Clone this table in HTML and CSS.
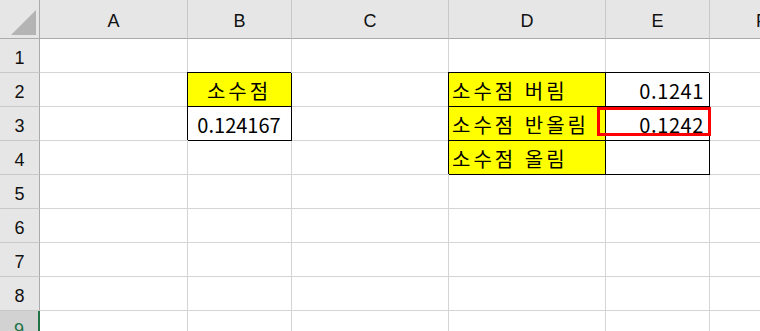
FILE: index.html
```html
<!DOCTYPE html>
<html lang="ko">
<head>
    <meta charset="UTF-8">
    <meta name="viewport" content="width=device-width, initial-scale=1.0">
    <title>소수점 처리</title>
    <link rel="stylesheet" href="styles.css">
</head>
<body>
    <div class="sheet">
        <!-- column headers -->
        <div class="corner"><span class="corner-mark"></span></div>
        <div class="col-head">A</div>
        <div class="col-head">B</div>
        <div class="col-head">C</div>
        <div class="col-head">D</div>
        <div class="col-head">E</div>
        <div class="col-head">F</div>

        <!-- row 1 -->
        <div class="row-head">1</div>
        <div class="cell"></div>
        <div class="cell"></div>
        <div class="cell"></div>
        <div class="cell"></div>
        <div class="cell"></div>
        <div class="cell"></div>

        <!-- row 2 -->
        <div class="row-head">2</div>
        <div class="cell"></div>
        <div class="cell box fill center">소수점</div>
        <div class="cell"></div>
        <div class="cell box fill">소수점 버림</div>
        <div class="cell box num">0.1241</div>
        <div class="cell"></div>

        <!-- row 3 -->
        <div class="row-head">3</div>
        <div class="cell"></div>
        <div class="cell box center">0.124167</div>
        <div class="cell"></div>
        <div class="cell box fill">소수점 반올림</div>
        <div class="cell box num marked">0.1242<span class="highlight"></span></div>
        <div class="cell"></div>

        <!-- row 4 -->
        <div class="row-head">4</div>
        <div class="cell"></div>
        <div class="cell"></div>
        <div class="cell"></div>
        <div class="cell box fill">소수점 올림</div>
        <div class="cell box num"></div>
        <div class="cell"></div>

        <!-- rows 5-8 -->
        <div class="row-head">5</div>
        <div class="cell"></div><div class="cell"></div><div class="cell"></div>
        <div class="cell"></div><div class="cell"></div><div class="cell"></div>

        <div class="row-head">6</div>
        <div class="cell"></div><div class="cell"></div><div class="cell"></div>
        <div class="cell"></div><div class="cell"></div><div class="cell"></div>

        <div class="row-head">7</div>
        <div class="cell"></div><div class="cell"></div><div class="cell"></div>
        <div class="cell"></div><div class="cell"></div><div class="cell"></div>

        <div class="row-head">8</div>
        <div class="cell"></div><div class="cell"></div><div class="cell"></div>
        <div class="cell"></div><div class="cell"></div><div class="cell"></div>

        <!-- row 9 (selected) -->
        <div class="row-head active">9</div>
        <div class="cell"></div><div class="cell"></div><div class="cell"></div>
        <div class="cell"></div><div class="cell"></div><div class="cell"></div>
    </div>
</body>
</html>
```

FILE: styles.css
```css
* {
    margin: 0;
    padding: 0;
    box-sizing: border-box;
}

body {
    background: #fff;
    overflow: hidden;
    font-family: "Liberation Sans", Arial, sans-serif;
}

.sheet {
    display: grid;
    grid-template-columns: 40px 148px 104px 157px 157px 104px 104px;
    grid-template-rows: 39px repeat(9, 34px);
    width: 814px;
}

/* headers */
.corner {
    background: #e6e6e6;
    border-right: 1px solid #ababab;
    border-bottom: 1px solid #ababab;
    display: flex;
    align-items: flex-end;
    justify-content: flex-end;
    padding: 0 3px 3px 0;
}

.corner-mark {
    width: 25px;
    height: 25px;
    background: #b4b4b4;
    clip-path: polygon(100% 0, 100% 100%, 0 100%);
}

.col-head {
    background: #e6e6e6;
    border-right: 1px solid #c8c8c8;
    border-bottom: 1px solid #ababab;
    display: flex;
    align-items: center;
    justify-content: center;
    padding-top: 5px;
    font-size: 18px;
    color: #111;
}

.row-head {
    background: #e6e6e6;
    border-right: 1px solid #ababab;
    border-bottom: 1px solid #c8c8c8;
    display: flex;
    align-items: center;
    justify-content: center;
    padding-top: 5px;
    font-size: 18px;
    color: #111;
}

.row-head.active {
    background: #d2d2d2;
    color: #217346;
    border-right: 2px solid #217346;
}

/* cells */
.cell {
    border-right: 1px solid #d4d4d4;
    border-bottom: 1px solid #d4d4d4;
    display: flex;
    align-items: center;
    padding: 2px 4px 0 3px;
    font-family: "Noto Sans CJK KR", "Liberation Sans", sans-serif;
    font-size: 20px;
    color: #000;
    white-space: nowrap;
}

.box {
    border-color: #000;
    box-shadow: -1px -1px 0 #000;
}

.fill {
    background: #ffff00;
    letter-spacing: 3px;
}

.center {
    justify-content: center;
}

.num {
    justify-content: flex-end;
    letter-spacing: 0.6px;
    padding-right: 5px;
}

.marked {
    position: relative;
}

/* red marker drawn over the rounded value */
.highlight {
    position: absolute;
    left: -9px;
    top: 0;
    width: 114px;
    height: 29px;
    border: 3px solid #ff0000;
}
```
